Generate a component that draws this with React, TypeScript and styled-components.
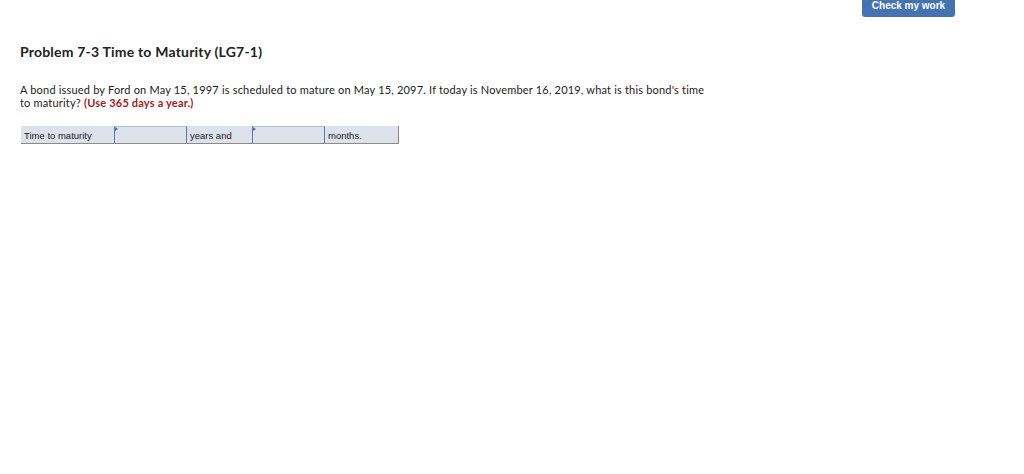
import React from "react";
import styled, { createGlobalStyle } from "styled-components";

const Global = createGlobalStyle`
  html, body { margin: 0; padding: 0; background: #ffffff; }
  body { width: 1024px; height: 474px; overflow: hidden; }
`;

const Page = styled.div`
  width: 1024px;
  height: 474px;
  display: flex;
  flex-direction: column;
`;

const TopBar = styled.div`
  display: flex;
  justify-content: flex-end;
  padding-right: 69px;
`;

const CheckButton = styled.button`
  width: 93px;
  height: 17px;
  padding: 0 0 5px;
  border: none;
  border-radius: 0 0 3px 3px;
  background: #4473b4;
  color: #ffffff;
  font-family: "Liberation Sans", Arial, sans-serif;
  font-weight: 700;
  font-size: 10px;
  line-height: 12px;
  cursor: pointer;
`;

const Content = styled.div`
  padding: 27px 0 0 20px;
  display: flex;
  flex-direction: column;
`;

const Title = styled.h1`
  margin: 0;
  font-family: Lato, "Open Sans", sans-serif;
  font-weight: 700;
  font-size: 14px;
  letter-spacing: 0.2px;
  line-height: 16px;
  color: #222222;
`;

const Question = styled.p`
  margin: 23px 0 0;
  width: 690px;
  font-family: Lato, "Open Sans", sans-serif;
  font-size: 11px;
  letter-spacing: 0.19px;
  line-height: 13px;
  color: #222222;
`;

const Hint = styled.strong`
  color: #a51c1c;
  font-weight: 700;
`;

const AnswerRow = styled.div`
  margin: 17px 0 0 1px;
  display: flex;
  height: 17px;
  background: #dde1ea;
  border-bottom: 1px solid #8a8a8a;
  border-right: 1px solid #8a8a8a;
  width: max-content;
`;

const Label = styled.div<{ $w: number }>`
  width: ${(p) => p.$w}px;
  box-sizing: border-box;
  padding: 1px 3px 0;
  display: flex;
  align-items: center;
  font-family: "Liberation Sans", Arial, sans-serif;
  font-size: 9.5px;
  color: #222222;
`;

const InputCell = styled.div<{ $w: number }>`
  position: relative;
  width: ${(p) => p.$w}px;
  box-sizing: border-box;
  border-left: 1px solid #4f7cb8;
  border-right: 1px solid #4f7cb8;
  border-top: 1px solid #a9bfdc;
  background: #dde1ea;
`;

const Flag = styled.span`
  position: absolute;
  left: 0;
  top: 0;
  width: 0;
  height: 0;
  border-top: 2px solid transparent;
  border-bottom: 2px solid transparent;
  border-left: 3px solid #3f74c2;
`;

export default function App() {
  return (
    <Page>
      <Global />
      <TopBar>
        <CheckButton>Check my work</CheckButton>
      </TopBar>
      <Content>
        <Title>Problem 7-3 Time to Maturity (LG7-1)</Title>
        <Question>
          A bond issued by Ford on May 15, 1997 is scheduled to mature on May 15, 2097. If today is November 16, 2019, what is this bond's time to maturity? <Hint>(Use 365 days a year.)</Hint>
        </Question>
        <AnswerRow>
          <Label $w={93}>Time to maturity</Label>
          <InputCell $w={73}>
            <Flag />
          </InputCell>
          <Label $w={65}>years and</Label>
          <InputCell $w={73}>
            <Flag />
          </InputCell>
          <Label $w={73}>months.</Label>
        </AnswerRow>
      </Content>
    </Page>
  );
}
